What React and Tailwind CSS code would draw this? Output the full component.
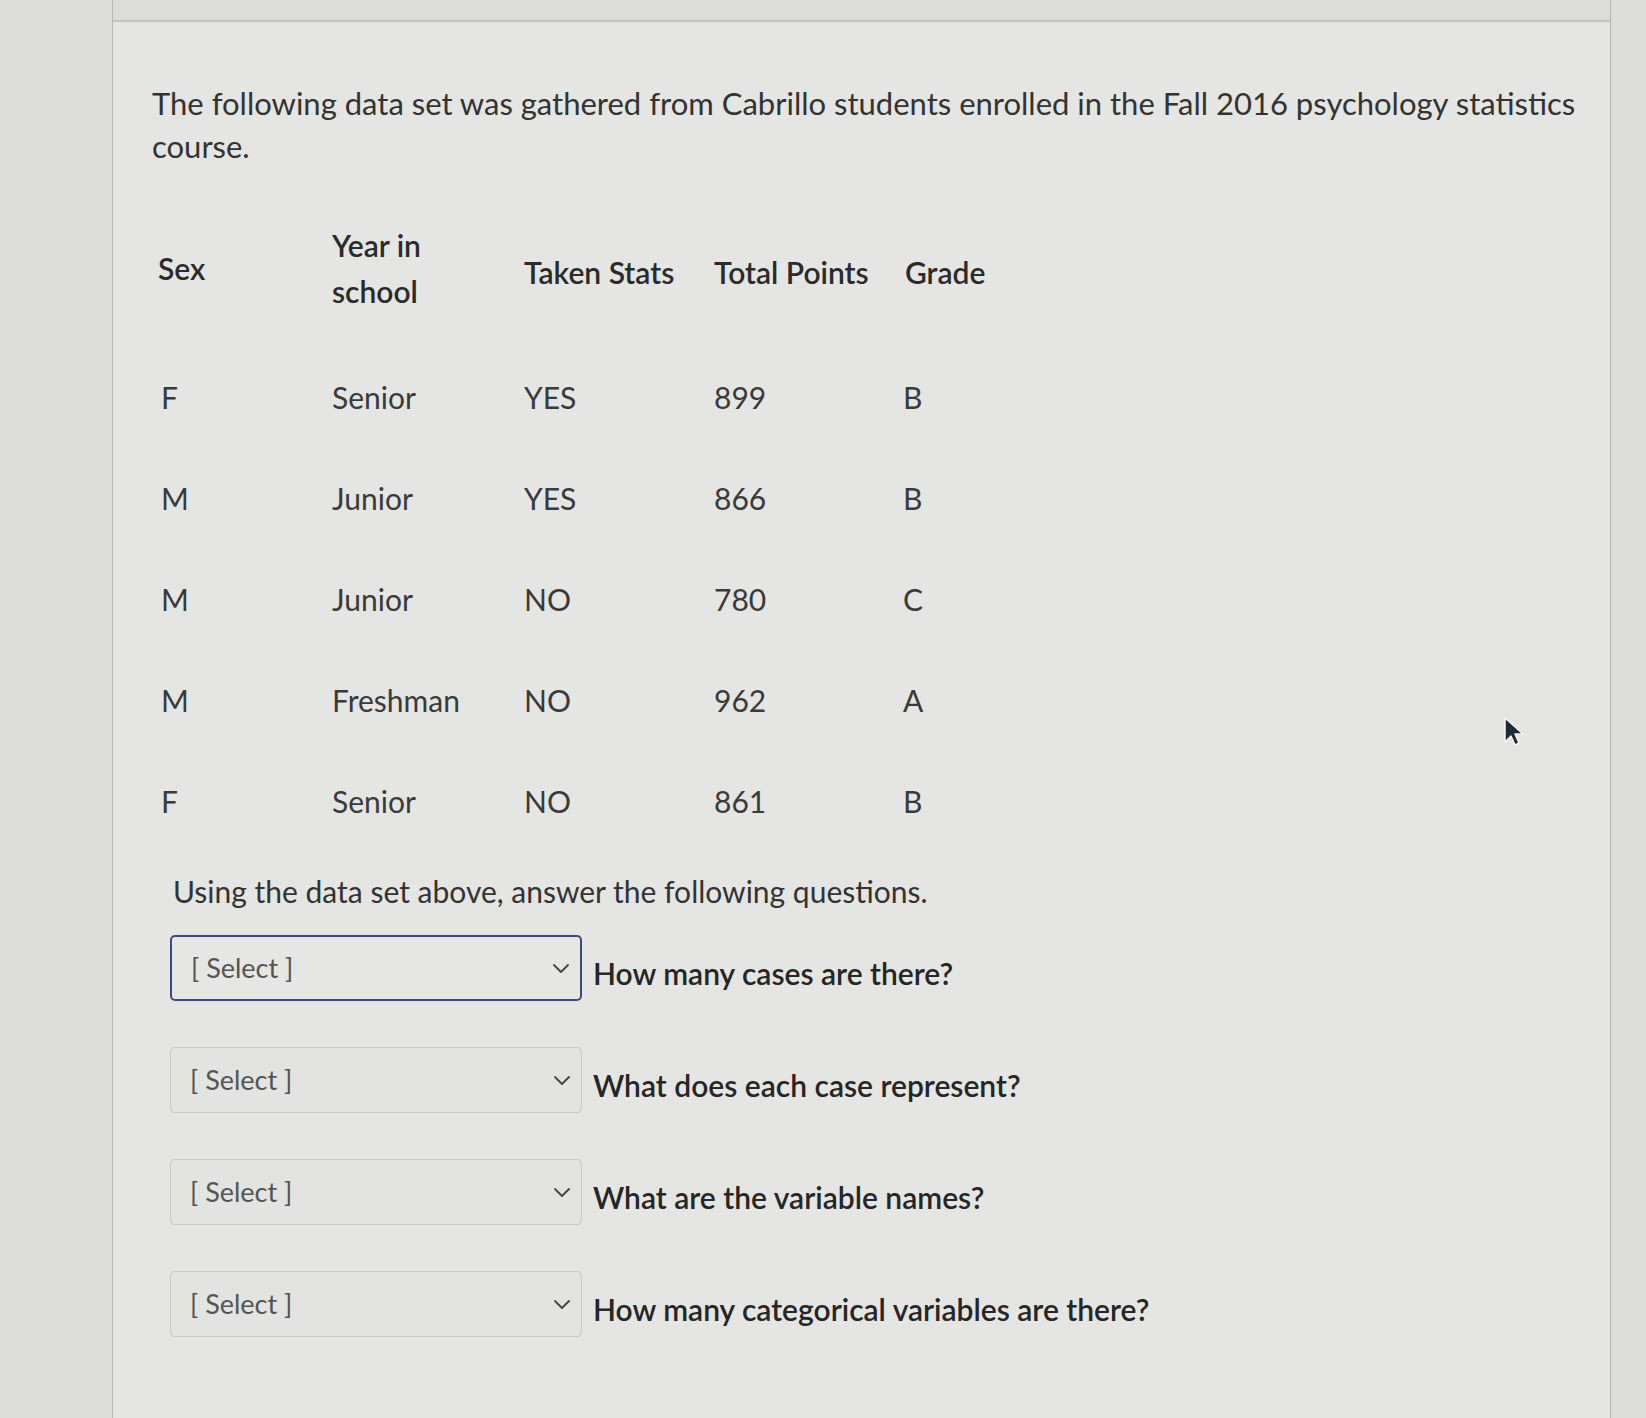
import React from "react";

const rows = [
  ["F", "Senior", "YES", "899", "B"],
  ["M", "Junior", "YES", "866", "B"],
  ["M", "Junior", "NO", "780", "C"],
  ["M", "Freshman", "NO", "962", "A"],
  ["F", "Senior", "NO", "861", "B"],
];

const questions = [
  { q: "How many cases are there?", focused: true },
  { q: "What does each case represent?" },
  { q: "What are the variable names?" },
  { q: "How many categorical variables are there?" },
];

function Chevron() {
  return (
    <svg width="18" height="11" viewBox="0 0 18 11" fill="none">
      <path d="M2 2l7 7 7-7" stroke="#444" strokeWidth="1.8" strokeLinecap="round" strokeLinejoin="round" />
    </svg>
  );
}

function SelectBox({ focused }) {
  return (
    <div
      className={
        "flex items-center justify-between w-[412px] h-[66px] pl-[19px] pr-[10px] rounded-[5px] " +
        (focused
          ? "border-2 border-[#3a4a7c] bg-[#e6e6e4]"
          : "border border-[#c6c6c4] bg-[#e3e3e1]")
      }
    >
      <span className="text-[27px] text-[#555]">[ Select ]</span>
      <Chevron />
    </div>
  );
}

export default function App() {
  return (
    <div className="flex w-[1646px] h-[1418px] overflow-hidden bg-[#dededc] text-[#2f2f2f] font-['Lato','Open_Sans',sans-serif] relative">
      <div className="w-[113px] shrink-0 bg-[#dcdcda] border-r border-[#b9b9b7]" />

      <div className="w-[1498px] shrink-0 flex flex-col bg-[#e5e5e3] border-r border-[#b5b5b3]">
        <div className="h-[22px] shrink-0 bg-[#dcdcda] border-b-2 border-[#c3c3c1]" />

        <div className="pl-[39px] pr-[20px] pt-[60px]">
          <p className="text-[31px] leading-[43px] text-[#333]">
            The following data set was gathered from Cabrillo students enrolled in the Fall 2016 psychology statistics course.
          </p>

          <div className="mt-[54px] pl-[6px]">
            <div className="grid grid-cols-[174px_192px_190px_191px_auto] items-center font-semibold text-[30px] leading-[46px] text-[#2b2b2b]">
              <div>Sex</div>
              <div>Year in<br />school</div>
              <div className="pt-[8px]">Taken Stats</div>
              <div className="pt-[8px]">Total Points</div>
              <div className="pt-[8px]">Grade</div>
            </div>

            <div className="mt-[65px] flex flex-col gap-[65px]">
              {rows.map((r, i) => (
                <div key={i} className="grid grid-cols-[174px_192px_190px_189px_auto] text-[30px] leading-[36px] text-[#3a3a3a]">
                  <div className="pl-[3px]">{r[0]}</div>
                  <div>{r[1]}</div>
                  <div>{r[2]}</div>
                  <div>{r[3]}</div>
                  <div>{r[4]}</div>
                </div>
              ))}
            </div>
          </div>

          <p className="mt-[52px] ml-[21px] text-[30px] leading-[40px] text-[#333]">
            Using the data set above, answer the following questions.
          </p>

          <div className="mt-[24px] ml-[18px] flex flex-col gap-[46px]">
            {questions.map((item, i) => (
              <div key={i} className="flex items-center gap-[11px]">
                <SelectBox focused={item.focused} />
                <span className="text-[30px] font-semibold text-[#262626] pt-[10px]">{item.q}</span>
              </div>
            ))}
          </div>
        </div>
      </div>

      <div className="flex-1 bg-[#dcdcda]" />

      <svg className="absolute left-[1502px] top-[716px]" width="24" height="32" viewBox="0 0 24 32">
        <path d="M3 2v24l6-6 4 9 4-2-4-9h8z" fill="#1f2937" stroke="#f5f5f5" strokeWidth="1.5" strokeLinejoin="round" />
      </svg>
    </div>
  );
}
